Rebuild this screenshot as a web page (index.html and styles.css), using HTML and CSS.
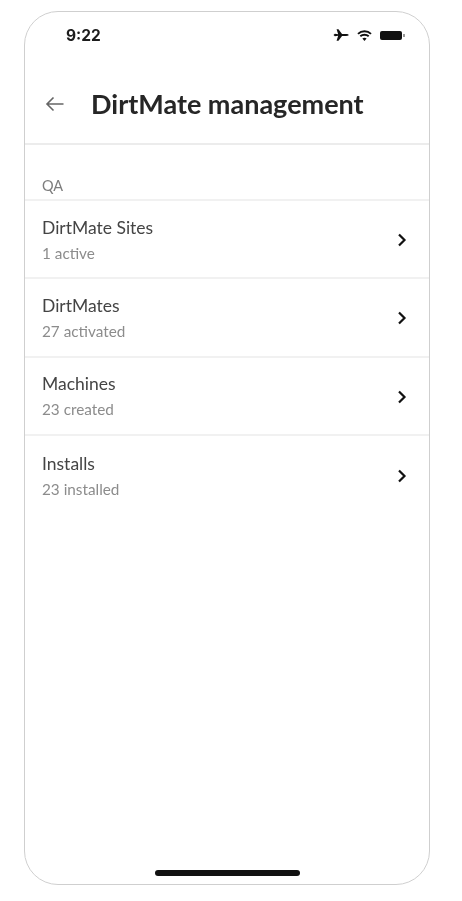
FILE: index.html
```html
<!DOCTYPE html>
<html lang="en">
  <head>
    <meta charset="UTF-8" />
    <meta name="viewport" content="width=device-width, initial-scale=1.0" />
    <title>DirtMate management</title>
    <link rel="stylesheet" href="styles.css">
  </head>
  <body>
    <div class="phone">
      <div class="status-bar">
        <span class="time">9:22</span>
        <div class="status-icons">
          <svg width="16" height="14" viewBox="0 0 17 14">
            <path d="M0.5 7 L2 5.8 L5.5 6.2 L3.8 0.8 L5.8 0.8 L9.6 6 L14 6 C15.4 6 16.6 6.4 16.6 7 C16.6 7.6 15.4 8 14 8 L9.6 8 L5.8 13.2 L3.8 13.2 L5.5 7.8 L2 8.2 Z" fill="#111" />
          </svg>
          <svg width="15" height="13" viewBox="0 0 15 12">
            <path d="M1 4.4 C4.6 0.9 10.4 0.9 14 4.4 M3.3 6.8 C5.6 4.7 9.4 4.7 11.7 6.8" fill="none" stroke="#111" stroke-width="1.9" />
            <path d="M5.4 8.9 C6.6 7.9 8.4 7.9 9.6 8.9 L7.5 11.4 Z" fill="#111" />
          </svg>
          <span class="battery"></span>
        </div>
      </div>

      <div class="header">
        <svg class="back" width="20" height="16" viewBox="0 0 20 16">
          <path d="M18.5 8 H2 M8.5 1.5 L2 8 L8.5 14.5" fill="none" stroke="#666" stroke-width="1.6" />
        </svg>
        <h1>DirtMate management</h1>
      </div>

      <div class="section-label">QA</div>

      <div class="row">
        <div class="row-text">
          <div class="row-title">DirtMate Sites</div>
          <div class="row-sub">1 active</div>
        </div>
        <svg class="chevron" width="10" height="14" viewBox="0 0 10 14">
          <path d="M2 1.5 L7.5 7 L2 12.5" fill="none" stroke="#111" stroke-width="2.2" />
        </svg>
      </div>
      <div class="row">
        <div class="row-text">
          <div class="row-title">DirtMates</div>
          <div class="row-sub">27 activated</div>
        </div>
        <svg class="chevron" width="10" height="14" viewBox="0 0 10 14">
          <path d="M2 1.5 L7.5 7 L2 12.5" fill="none" stroke="#111" stroke-width="2.2" />
        </svg>
      </div>
      <div class="row">
        <div class="row-text">
          <div class="row-title">Machines</div>
          <div class="row-sub">23 created</div>
        </div>
        <svg class="chevron" width="10" height="14" viewBox="0 0 10 14">
          <path d="M2 1.5 L7.5 7 L2 12.5" fill="none" stroke="#111" stroke-width="2.2" />
        </svg>
      </div>
      <div class="row row-last">
        <div class="row-text">
          <div class="row-title">Installs</div>
          <div class="row-sub">23 installed</div>
        </div>
        <svg class="chevron" width="10" height="14" viewBox="0 0 10 14">
          <path d="M2 1.5 L7.5 7 L2 12.5" fill="none" stroke="#111" stroke-width="2.2" />
        </svg>
      </div>

      <div class="home-bar"></div>
    </div>
  </body>
</html>
```
FILE: styles.css
```css
* {
  margin: 0;
  padding: 0;
  box-sizing: border-box;
}

body {
  font-family: "Lato", "Noto Sans", Arial, sans-serif;
  background: #fff;
  height: 901px;
  overflow: hidden;
  padding: 11px 32px 0 24px;
}

.phone {
  position: relative;
  width: 406px;
  height: 874px;
  border: 1.5px solid #cfcfcf;
  border-radius: 34px;
  background: #fff;
  filter: blur(0.4px);
}

.status-bar {
  display: flex;
  justify-content: space-between;
  align-items: center;
  height: 46px;
  padding: 0 24px 0 41px;
}

.time {
  font-family: "Inter", Arial, sans-serif;
  font-size: 15.5px;
  font-weight: 700;
  color: #1c1c1c;
}

.status-icons {
  display: flex;
  align-items: center;
  gap: 8px;
}

.battery {
  position: relative;
  display: block;
  width: 22px;
  height: 9px;
  margin-right: 3px;
  border-radius: 2px;
  background: #111;
}

.battery::after {
  content: "";
  position: absolute;
  left: 23px;
  top: 3px;
  width: 2px;
  height: 3px;
  background: #999;
}

.header {
  display: flex;
  align-items: center;
  height: 87px;
  padding: 6px 0 0 20px;
  border-bottom: 2px solid #ececec;
}

.back {
  margin-right: 26px;
}

h1 {
  font-size: 27px;
  font-weight: 700;
  color: #262626;
}

.section-label {
  display: flex;
  align-items: flex-end;
  height: 56px;
  padding: 0 0 5px 17px;
  font-size: 14.5px;
  color: #7d7d7d;
  border-bottom: 2px solid #f1f1f1;
}

.row {
  display: flex;
  justify-content: space-between;
  align-items: center;
  height: 78.3px;
  padding: 0 22px 0 17px;
  border-bottom: 2px solid #f1f1f1;
}

.row-last {
  border-bottom: none;
}

.row-title {
  font-size: 17.5px;
  color: #444;
  margin-bottom: 6px;
}

.row-sub {
  font-size: 15.3px;
  color: #8c8c8c;
}

.chevron {
  margin-top: 2px;
}

.home-bar {
  position: absolute;
  left: 130px;
  bottom: 8px;
  width: 145px;
  height: 6.5px;
  border-radius: 4px;
  background: #111;
}
```
